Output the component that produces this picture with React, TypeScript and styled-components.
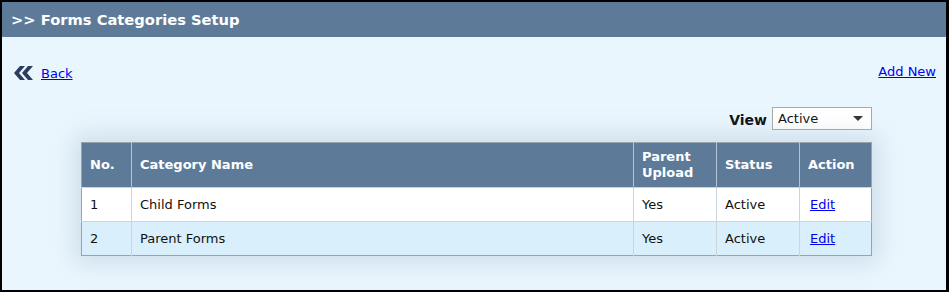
import React from 'react';
import styled, { createGlobalStyle } from 'styled-components';

const GlobalStyle = createGlobalStyle`
  html, body {
    margin: 0;
    padding: 0;
    background: #000;
  }
  body {
    font-family: 'DejaVu Sans', Verdana, sans-serif;
    font-size: 13px;
  }
`;

const Frame = styled.div`
  width: 949px;
  height: 292px;
  box-sizing: border-box;
  border-style: solid;
  border-color: #000;
  border-width: 2px 3px 2px 2px;
  display: flex;
  flex-direction: column;
  background: #eaf6fd;
`;

const TitleBar = styled.div`
  height: 35px;
  flex-shrink: 0;
  background: #5d7b98;
  color: #fff;
  font-weight: bold;
  font-size: 14.7px;
  display: flex;
  align-items: center;
  padding-left: 9px;
`;

const Body = styled.div`
  flex: 1;
  display: flex;
  flex-direction: column;
`;

const TopBar = styled.div`
  margin-top: 24px;
  height: 20px;
  padding: 0 10px 0 12px;
  display: flex;
  justify-content: space-between;
  align-items: center;
`;

const BackLink = styled.a`
  display: flex;
  align-items: center;
  gap: 7px;
  color: #0000ee;
  text-decoration: underline;
  cursor: pointer;
  margin-top: 4px;
`;

const PlainLink = styled.a`
  color: #0000ee;
  text-decoration: underline;
  cursor: pointer;
`;

const Content = styled.div`
  width: 791px;
  margin-left: 79px;
  display: flex;
  flex-direction: column;
`;

const ViewRow = styled.div`
  margin-top: 26px;
  display: flex;
  justify-content: flex-end;
  align-items: center;
  gap: 5px;
`;

const ViewLabel = styled.span`
  font-weight: bold;
  font-size: 14px;
  color: #111;
  margin-top: 2px;
`;

const SelectBox = styled.div`
  width: 100px;
  height: 23px;
  box-sizing: border-box;
  background: #fff;
  border: 1px solid #a9a9a9;
  display: flex;
  align-items: center;
  justify-content: space-between;
  padding: 0 8px 0 5px;
  color: #111;
`;

const Caret = styled.span`
  width: 0;
  height: 0;
  border-left: 5px solid transparent;
  border-right: 5px solid transparent;
  border-top: 5px solid #333;
`;

const Table = styled.table`
  margin-top: 12px;
  width: 791px;
  border-collapse: collapse;
  border: 1px solid #9aa3ab;
  box-shadow: 0 0 22px 6px rgba(150, 175, 200, 0.35);
  table-layout: fixed;
`;

const Th = styled.th<{ w?: number }>`
  width: ${(p) => (p.w ? `${p.w}px` : 'auto')};
  height: 45px;
  box-sizing: border-box;
  background: #5d7b98;
  color: #fff;
  font-weight: bold;
  font-size: 13px;
  text-align: left;
  padding: 0 8px;
  line-height: 16px;
  border-left: 1px solid #b5c3d0;
  &:first-child {
    border-left: none;
  }
`;

const Row = styled.tr<{ alt?: boolean }>`
  background: ${(p) => (p.alt ? '#d9effc' : '#fff')};
  border-top: 1px solid #cdd5dc;
`;

const Td = styled.td`
  height: 33px;
  padding: 0 8px;
  color: #111;
  border-left: 1px solid #cdd5dc;
  &:first-child {
    border-left: none;
  }
`;

const EditLink = styled.a`
  color: #0000ee;
  text-decoration: underline;
  cursor: pointer;
  padding-left: 2px;
`;

const BackIcon = () => (
  <svg width="20" height="14" viewBox="0 0 20 14">
    <polygon points="6,0 11,0 5,7 11,14 6,14 0,7" fill="#2c3d5f" />
    <polygon points="14,0 19,0 13,7 19,14 14,14 8,7" fill="#2c3d5f" />
  </svg>
);

const rows = [
  { no: 1, name: 'Child Forms', upload: 'Yes', status: 'Active' },
  { no: 2, name: 'Parent Forms', upload: 'Yes', status: 'Active' },
];

export default function App() {
  return (
    <>
      <GlobalStyle />
      <Frame>
        <TitleBar>&gt;&gt; Forms Categories Setup</TitleBar>
        <Body>
          <TopBar>
            <BackLink>
              <BackIcon />
              Back
            </BackLink>
            <PlainLink>Add New</PlainLink>
          </TopBar>
          <Content>
            <ViewRow>
              <ViewLabel>View</ViewLabel>
              <SelectBox>
                Active
                <Caret />
              </SelectBox>
            </ViewRow>
            <Table>
              <thead>
                <tr>
                  <Th w={50}>No.</Th>
                  <Th w={502}>Category Name</Th>
                  <Th w={83}>
                    Parent
                    <br />
                    Upload
                  </Th>
                  <Th w={83}>Status</Th>
                  <Th>Action</Th>
                </tr>
              </thead>
              <tbody>
                {rows.map((r, i) => (
                  <Row key={r.no} alt={i % 2 === 1}>
                    <Td>{r.no}</Td>
                    <Td>{r.name}</Td>
                    <Td>{r.upload}</Td>
                    <Td>{r.status}</Td>
                    <Td>
                      <EditLink>Edit</EditLink>
                    </Td>
                  </Row>
                ))}
              </tbody>
            </Table>
          </Content>
        </Body>
      </Frame>
    </>
  );
}
